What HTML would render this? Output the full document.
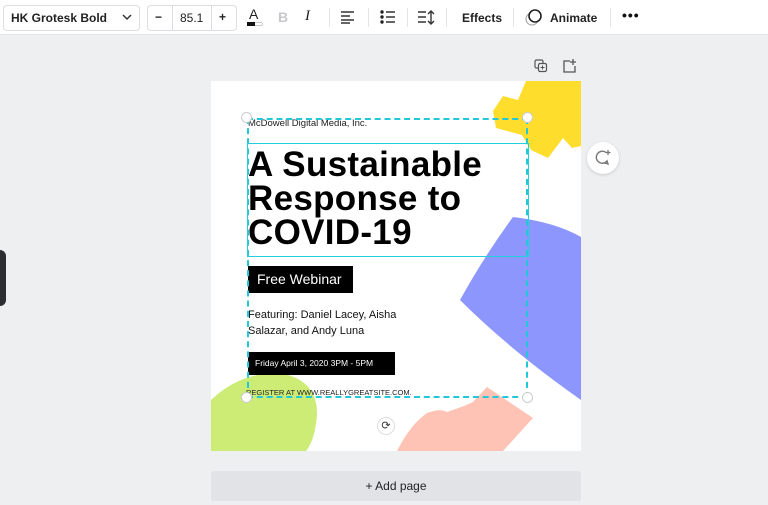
<!DOCTYPE html>
<html><head><style>
*{margin:0;padding:0;box-sizing:border-box}
body{width:768px;height:505px;background:#eeeff1;font-family:"Liberation Sans",sans-serif;position:relative;overflow:hidden;color:#111}
.tb{position:absolute;left:0;top:0;width:768px;height:35px;background:#fff;border-bottom:1px solid #e3e4e6}
.a{position:absolute}
.sep{position:absolute;top:8px;width:1px;height:19px;background:#e3e4e6}
.tt{font-size:12px;font-weight:bold;color:#222}
</style></head><body>
<div class="tb">
 <div class="a" style="left:3px;top:5px;width:137px;height:26px;border:1px solid #dcdde0;border-radius:4px"></div>
 <div class="a tt" style="left:11px;top:11px">HK Grotesk Bold</div>
 <svg class="a" style="left:122px;top:13px" width="10" height="8"><path d="M1 2l4 4 4-4" stroke="#333" stroke-width="1.5" fill="none"/></svg>
 <div class="a" style="left:147px;top:5px;width:90px;height:26px;border:1px solid #dcdde0;border-radius:4px"></div>
 <div class="a" style="left:172px;top:5px;width:1px;height:26px;background:#dcdde0"></div>
 <div class="a" style="left:211px;top:5px;width:1px;height:26px;background:#dcdde0"></div>
 <div class="a tt" style="left:155px;top:10px">−</div>
 <div class="a" style="left:180px;top:11px;font-size:12px;color:#222">85.1</div>
 <div class="a tt" style="left:219px;top:10px">+</div>
 <div class="a" style="left:249px;top:6px;font-size:14px;color:#222">A</div>
 <div class="a" style="left:247px;top:22px;width:16px;height:4px;border:1px solid #ccc;border-radius:2px"><div style="width:8px;height:4px;background:#111;margin:-1px"></div></div>
 <div class="a" style="left:278px;top:9px;font-size:14px;font-weight:bold;color:#c8c8cc">B</div>
 <div class="a" style="left:305px;top:8px;font-size:15px;font-style:italic;font-family:'Liberation Serif',serif;color:#222">I</div>
 <div class="sep" style="left:329px"></div>
 <svg class="a" style="left:340px;top:11px" width="16" height="13"><path d="M1 1h13M1 5h9M1 9h13M1 12h9" stroke="#333" stroke-width="1.5"/></svg>
 <div class="sep" style="left:368px"></div>
 <svg class="a" style="left:380px;top:10px" width="16" height="15"><circle cx="2" cy="2" r="1.7" fill="#222"/><circle cx="2" cy="7" r="1.7" fill="#222"/><circle cx="2" cy="12" r="1.7" fill="#222"/><path d="M6 2h9M6 7h9M6 12h9" stroke="#333" stroke-width="1.5"/></svg>
 <div class="sep" style="left:407px"></div>
 <svg class="a" style="left:417px;top:10px" width="18" height="15"><path d="M1 2h8M1 7h8M1 12h8M14 1v13M11 4l3-3 3 3M11 11l3 3 3-3" stroke="#333" stroke-width="1.4" fill="none"/></svg>
 <div class="sep" style="left:446px"></div>
 <div class="a tt" style="left:462px;top:11px">Effects</div>
 <div class="sep" style="left:513px"></div>
 <svg class="a" style="left:524px;top:8px" width="20" height="18"><circle cx="8" cy="11" r="6" stroke="#aaa" fill="none" stroke-width="1.2"/><circle cx="11" cy="8" r="6" stroke="#222" fill="#fff" stroke-width="1.6"/></svg>
 <div class="a tt" style="left:550px;top:11px">Animate</div>
 <div class="sep" style="left:610px"></div>
 <div class="a" style="left:622px;top:7px;font-size:14px;font-weight:bold;letter-spacing:1px">•••</div>
</div>
<div class="a" style="left:0;top:250px;width:6px;height:56px;background:#2b2d31;border-radius:0 6px 6px 0"></div>
<svg class="a" style="left:534px;top:59px" width="14" height="14"><rect x="1" y="1" width="8" height="8" rx="1.5" stroke="#555" fill="none" stroke-width="1.2"/><rect x="4.5" y="4.5" width="8" height="8" rx="1.5" stroke="#555" fill="#eeeff1" stroke-width="1.2"/><path d="M8.5 6.5v4M6.5 8.5h4" stroke="#555"/></svg>
<svg class="a" style="left:562px;top:58px" width="15" height="15"><path d="M8 3H2v11h11V8M11 1v6M8 4h6" stroke="#555" fill="none" stroke-width="1.3"/></svg>
<div class="a" style="left:211px;top:81px;width:370px;height:370px;background:#fff;overflow:hidden">
<svg class="a" style="left:0;top:0" width="370" height="370">
 <g transform="translate(-211,-81)">
 <path d="M493 111L503 96L518 100L526 81L581 81L581 146L572 148L563 138L548 158L531 150L522 135L496 128Z" fill="#fedd2c"/>
 <path d="M513 217Q555 222 581 237L581 400Q510 350 460 300Q485 255 513 217Z" fill="#8c96fd"/>
 <path d="M211 400Q240 372 280 373Q318 380 317 415Q315 440 306 451L211 451Z" fill="#cdec76"/>
 <path d="M397 451Q410 425 427 413Q440 408 447 412Q465 406 473 402L487 387L533 418L503 451Z" fill="#fec3b4"/>
 </g>
</svg>
<div class="a" style="left:37px;top:37px;font-size:9.5px;color:#222">McDowell Digital Media, Inc.</div>
<div class="a" style="left:37px;top:67px;font-size:35px;font-weight:bold;line-height:34px;letter-spacing:0.3px;color:#000">A Sustainable<br>Response to<br>COVID-19</div>
<div class="a" style="left:37px;top:185px;width:105px;height:27px;background:#000;color:#fff;font-size:14px;line-height:27px;padding-left:9px">Free Webinar</div>
<div class="a" style="left:37px;top:226px;font-size:11px;line-height:16px;color:#111">Featuring: Daniel Lacey, Aisha<br>Salazar, and Andy Luna</div>
<div class="a" style="left:37px;top:271px;width:147px;height:23px;background:#000;color:#fff;font-size:8.5px;line-height:23px;padding-left:7px">Friday April 3, 2020 3PM - 5PM</div>
<div class="a" style="left:35px;top:307px;font-size:7.5px;color:#222">REGISTER AT WWW.REALLYGREATSITE.COM.</div>
<div class="a" style="left:36px;top:37px;width:281px;height:280px;border:2px dashed #22c8d8"></div>
<div class="a" style="left:36px;top:62px;width:282px;height:114px;border:1.5px solid #22d0dc"></div>
<div class="a" style="left:30px;top:31px;width:11px;height:11px;border-radius:50%;background:#fff;border:1px solid #ccc"></div>
<div class="a" style="left:311px;top:31px;width:11px;height:11px;border-radius:50%;background:#fff;border:1px solid #ccc"></div>
<div class="a" style="left:30px;top:311px;width:11px;height:11px;border-radius:50%;background:#fff;border:1px solid #ccc"></div>
<div class="a" style="left:311px;top:311px;width:11px;height:11px;border-radius:50%;background:#fff;border:1px solid #ccc"></div>
<div class="a" style="left:166px;top:336px;width:18px;height:18px;border-radius:50%;background:#fff;border:1px solid #ddd;font-size:11px;text-align:center;line-height:16px;color:#333">⟳</div>
</div>
<div class="a" style="left:587px;top:142px;width:32px;height:32px;border-radius:50%;background:#fff;box-shadow:0 1px 3px rgba(0,0,0,.15)"></div>
<svg class="a" style="left:594px;top:149px" width="18" height="18"><path d="M12 3.5A6 6 0 1 0 13 12L14 15L10.5 14" stroke="#777" fill="none" stroke-width="1.4"/><path d="M14 1v5M11.5 3.5h5" stroke="#777" stroke-width="1.3"/></svg>
<div class="a" style="left:211px;top:471px;width:370px;height:30px;background:#e1e3e7;border-radius:3px;text-align:center;line-height:30px;font-size:12px;color:#222">+ Add page</div>
</body></html>
